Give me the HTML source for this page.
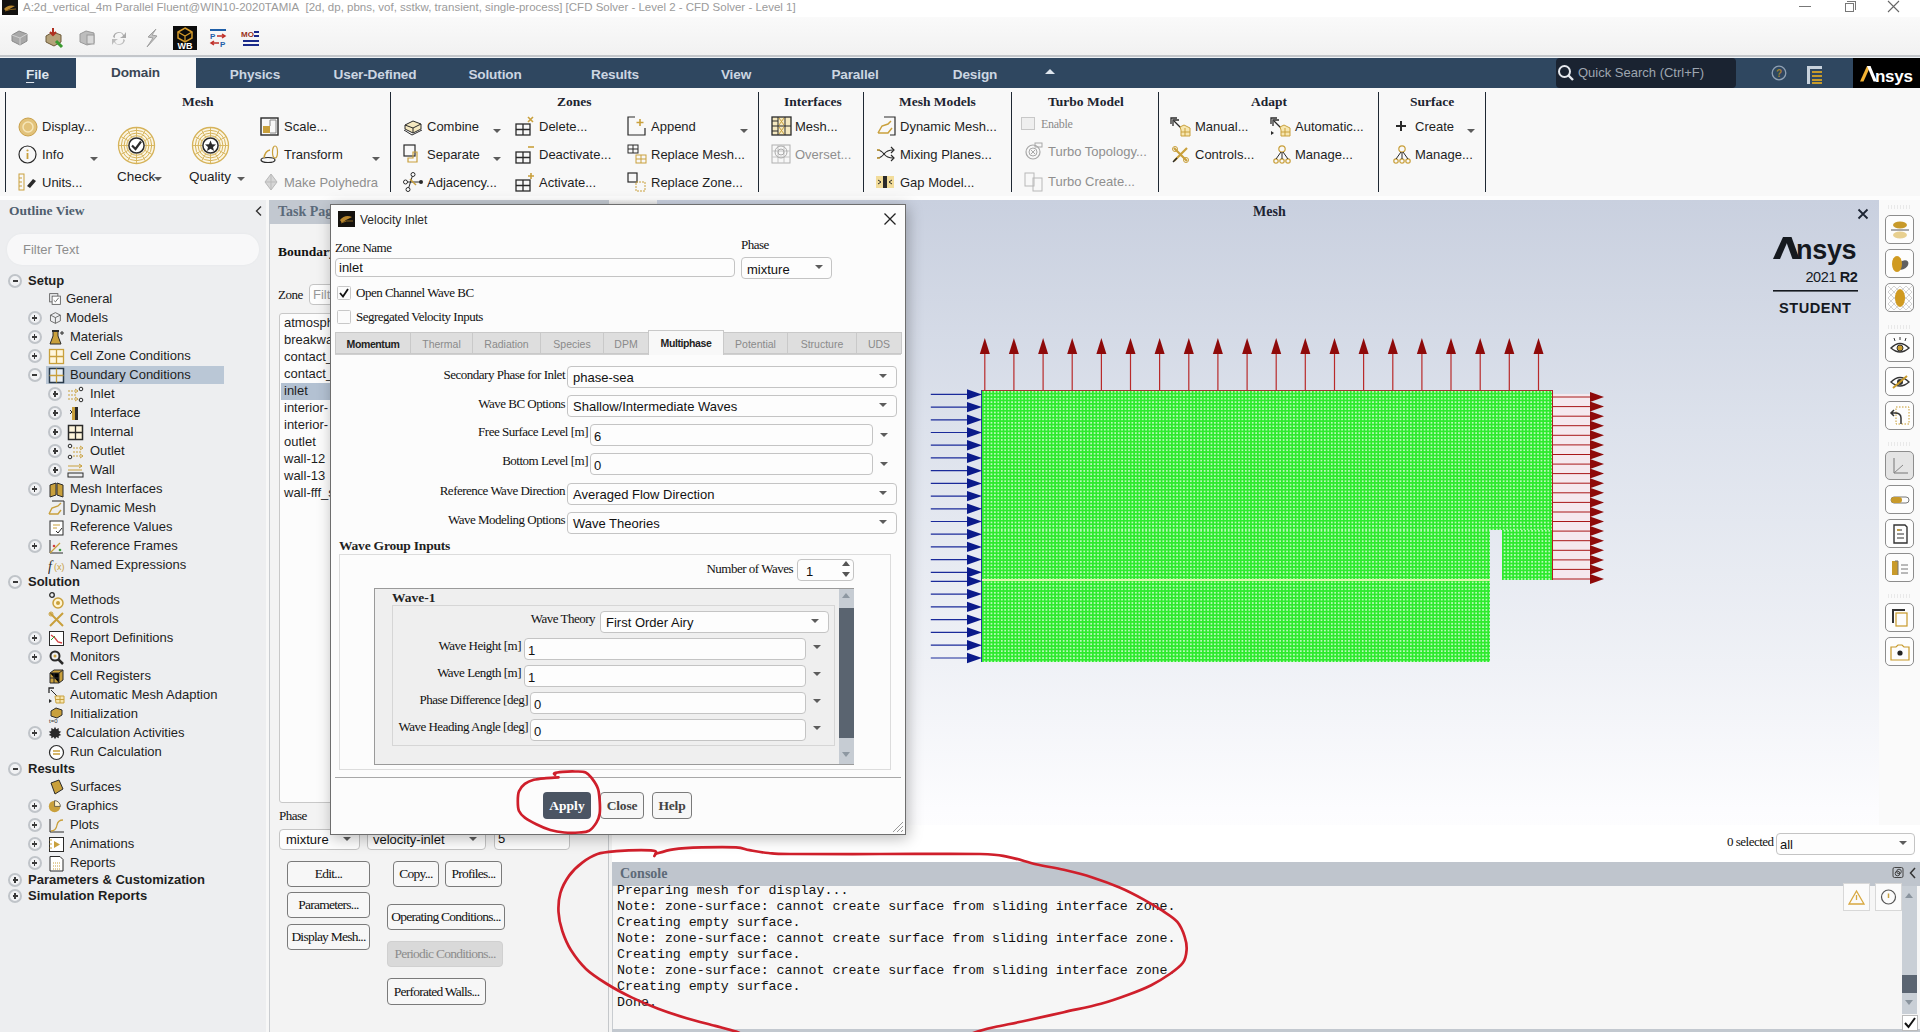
<!DOCTYPE html>
<html><head><meta charset="utf-8"><title>Fluent</title>
<style>
*{box-sizing:border-box}
html,body{margin:0;padding:0}
body{width:1920px;height:1032px;overflow:hidden;position:relative;background:#f3f3f3;font-family:"Liberation Sans",sans-serif;color:#222}
.a{position:absolute;white-space:nowrap}
.sf{font-family:"Liberation Serif",serif}
.mono{font-family:"Liberation Mono",monospace}
.rt{font-size:13px;color:#1e1e1e;line-height:16px}
.gt{font-family:"Liberation Serif",serif;font-weight:bold;font-size:13.5px;color:#1c2430;line-height:16px}
.caret{position:absolute;width:0;height:0;border-left:4.5px solid transparent;border-right:4.5px solid transparent;border-top:4.5px solid #5c5c5c}
.sep{position:absolute;width:1px;background:#1f2833;top:92px;height:100px}
.tab{position:absolute;top:59px;height:30px;line-height:31px;font-size:13.6px;font-weight:bold;color:#ccd6e2;letter-spacing:-0.15px}
.tr{position:absolute;font-size:13px;color:#1e1e1e;line-height:16px}
.pm{position:absolute;width:14px;height:14px;border-radius:50%;border:2px solid #c0c4c9;background:#f1f2f4}
.pm:before{content:"";position:absolute;left:2.5px;top:4.15px;width:5px;height:1.7px;background:#3a3a3a}
.pm.p:after{content:"";position:absolute;left:4.15px;top:2.4px;width:1.7px;height:5.2px;background:#3a3a3a}
.btn{position:absolute;border:1px solid #7a7a7a;border-radius:4px;background:#f7f7f7;font-family:"Liberation Serif",serif;font-size:13.5px;color:#111;text-align:center;letter-spacing:-0.75px}
.inp{position:absolute;border:1px solid #c4c4c4;border-radius:4px;background:#fdfdfd;font-size:13px;color:#111;padding-left:3px}
.lbl{position:absolute;font-family:"Liberation Serif",serif;font-size:13px;color:#111;letter-spacing:-0.5px;line-height:14px}
.dtab{position:absolute;top:332px;height:22px;line-height:22px;border:1px solid #c9c9c9;background:#dedede;font-size:10.5px;color:#8a8a8a;text-align:center}
.cl{position:absolute;left:617px;font-family:"Liberation Mono",monospace;font-size:13.3px;color:#111;line-height:16px}
.tbb{position:absolute;left:1885px;width:29px;height:29px;border:1px solid #8d8d8d;border-radius:5px;background:#fdfdfd}
</style></head><body>

<div class="a" style="left:0;top:0;width:1920px;height:17px;background:#fff"></div>
<div class="a" style="left:2px;top:0;width:16px;height:15px;background:#141210"><svg width="16" height="15"><path d="M2 9 Q6 4 13 6 Q9 8 4 11Z" fill="#b8862e"/><path d="M3 11 Q8 9 14 9" stroke="#8a6420" fill="none"/></svg></div>
<div class="a" style="left:23px;top:0px;font-size:11.5px;color:#9b9b9b;line-height:15px">A:2d_vertical_4m Parallel Fluent@WIN10-2020TAMIA&nbsp; [2d, dp, pbns, vof, sstkw, transient, single-process] [CFD Solver - Level 2 - CFD Solver - Level 1]</div>
<div class="a" style="left:1799px;top:6px;width:12px;height:1px;background:#777"></div>
<div class="a" style="left:1845px;top:3px;width:9px;height:9px;border:1px solid #777"></div><div class="a" style="left:1847px;top:1px;width:9px;height:9px;border-top:1px solid #777;border-right:1px solid #777"></div>
<svg class="a" style="left:1887px;top:0px" width="13" height="13"><path d="M1 1 L12 12 M12 1 L1 12" stroke="#666" stroke-width="1.1"/></svg>
<div class="a" style="left:0;top:17px;width:1920px;height:39px;background:linear-gradient(#fafafa,#f1f1f1)"></div>
<div class="a" style="left:0;top:55px;width:1920px;height:2px;background:#c3c6ca"></div>
<div class="a" style="left:0;top:57px;width:1920px;height:1px;background:#eef2f6"></div>
<svg class="a" style="left:10px;top:27px" width="20" height="20"><path d="M2 8 L9 4 L17 7 L17 14 L10 18 L2 14Z" fill="#a8a8a8" stroke="#8a8a8a"/><path d="M2 8 L10 11 L17 7 M10 11 L10 18" stroke="#cfcfcf" fill="none"/></svg>
<svg class="a" style="left:44px;top:27px" width="20" height="22"><path d="M2 9 L9 5 L17 8 L17 15 L10 19 L2 15Z" fill="#b5a27a" stroke="#6d5a3a"/><path d="M9 1 L9 8 M6 5 L9 8 L12 5" stroke="#b03020" stroke-width="2" fill="none"/><path d="M12 14 L18 20" stroke="#3a9a30" stroke-width="3"/></svg>
<svg class="a" style="left:78px;top:27px" width="20" height="20"><path d="M2 7 L8 4 L16 6 L16 16 L9 18 L2 15Z" fill="#bdbdbd" stroke="#999"/><rect x="9" y="8" width="7" height="9" fill="#d8d8d8" stroke="#999"/></svg>
<svg class="a" style="left:110px;top:29px" width="18" height="18"><path d="M3 8 A6 6 0 0 1 14 6 L16 3 L16 9 L10 9 L13 7 A4 4 0 0 0 5 9Z" fill="#a9a9a9"/><path d="M15 11 A6 6 0 0 1 4 13 L2 16 L2 10 L8 10 L5 12 A4 4 0 0 0 13 10Z" fill="#bdbdbd"/></svg>
<svg class="a" style="left:144px;top:28px" width="16" height="20"><path d="M12 1 L4 9 L9 10 L3 19 L13 8 L8 7Z" fill="#c4c4c4" stroke="#a0a0a0"/></svg>
<div class="a" style="left:173px;top:26px;width:24px;height:24px;background:#0c0c0c"><svg width="24" height="24"><path d="M12 2 L19 6 L19 12 L12 16 L5 12 L5 6Z" fill="none" stroke="#d49a2a" stroke-width="1.5"/><path d="M5 6 L12 10 L19 6 M12 10 L12 16" stroke="#d49a2a" stroke-width="1.2" fill="none"/><text x="12" y="23" font-size="9" font-weight="bold" fill="#fff" text-anchor="middle" font-family="Liberation Sans">WB</text></svg></div>
<svg class="a" style="left:209px;top:28px" width="18" height="20"><rect x="1" y="1" width="16" height="2" fill="#1f5fa8"/><text x="1" y="11" font-size="8" font-weight="bold" fill="#1f5fa8" font-family="Liberation Sans">P</text><path d="M8 8 L16 8 M13 6 L16 8 L13 10" stroke="#c0302a" stroke-width="1.5" fill="none"/><path d="M2 15 L10 15 M5 13 L2 15 L5 17" stroke="#c0302a" stroke-width="1.5" fill="none"/><text x="11" y="19" font-size="8" font-weight="bold" fill="#1f5fa8" font-family="Liberation Sans">P</text></svg>
<svg class="a" style="left:241px;top:29px" width="19" height="18"><text x="0" y="8" font-size="8" font-weight="bold" fill="#9a3020" font-family="Liberation Sans">MO</text><rect x="13" y="2" width="5" height="2" fill="#1a2a8a"/><rect x="13" y="6" width="5" height="2" fill="#1a2a8a"/><rect x="2" y="11" width="16" height="2" fill="#1a2a8a"/><rect x="2" y="15" width="16" height="2" fill="#1a2a8a"/></svg>
<div class="a" style="left:0;top:58px;width:1920px;height:30px;background:#2f4760"></div>
<div class="a" style="left:0;top:58px;width:76px;height:30px;background:#2d4560"></div>
<div class="tab" style="left:26px;color:#dfe6ee"><span style="text-decoration:underline;text-underline-offset:3px">F</span>ile</div>
<div class="a" style="left:76px;top:58px;width:120px;height:30px;background:#f8f8f8"></div>
<div class="tab" style="left:111px;top:57px;color:#3a4654">Domain</div>
<div class="tab" style="left:195px;width:120px;text-align:center">Physics</div>
<div class="tab" style="left:315px;width:120px;text-align:center">User-Defined</div>
<div class="tab" style="left:435px;width:120px;text-align:center">Solution</div>
<div class="tab" style="left:555px;width:120px;text-align:center">Results</div>
<div class="tab" style="left:676px;width:120px;text-align:center">View</div>
<div class="tab" style="left:795px;width:120px;text-align:center">Parallel</div>
<div class="tab" style="left:915px;width:120px;text-align:center">Design</div>
<div class="a" style="left:1045px;top:69px;width:0;height:0;border-left:5px solid transparent;border-right:5px solid transparent;border-bottom:5px solid #dfe6ee"></div>
<div class="a" style="left:1556px;top:58px;width:180px;height:30px;background:#1a2331;border-radius:4px"></div>
<svg class="a" style="left:1557px;top:64px" width="18" height="18"><circle cx="7.5" cy="7.5" r="5.5" stroke="#e6e9ee" stroke-width="2" fill="none"/><path d="M11.5 11.5 L16 16" stroke="#e6e9ee" stroke-width="2.4"/></svg>
<div class="a" style="left:1578px;top:58px;line-height:30px;font-size:13px;color:#9ea6b0">Quick Search (Ctrl+F)</div>
<svg class="a" style="left:1771px;top:65px" width="16" height="16"><circle cx="8" cy="8" r="6.8" stroke="#8fa0b3" stroke-width="1.3" fill="none"/><text x="8" y="12" font-size="10" font-weight="bold" fill="#a08030" text-anchor="middle" font-family="Liberation Sans">?</text></svg>
<svg class="a" style="left:1806px;top:65px" width="17" height="20"><rect x="1" y="1" width="15" height="3" fill="#c8d2dc"/><rect x="1" y="1" width="3" height="18" fill="#c8d2dc"/><rect x="6" y="6" width="10" height="2" fill="#c69a2a"/><rect x="6" y="10" width="10" height="2" fill="#c69a2a"/><rect x="6" y="14" width="10" height="2" fill="#c69a2a"/><rect x="6" y="17" width="10" height="2" fill="#c69a2a"/></svg>
<div class="a" style="left:1853px;top:58px;width:67px;height:30px;background:#000"></div>
<svg class="a" style="left:1858px;top:62px" width="60" height="24"><path d="M2 19.5 L9 4 L12.5 4 L5.5 19.5Z" fill="#f2b233"/><path d="M9 4 L12.5 4 L19 19.5 L15.5 19.5Z" fill="#fff"/><text x="17" y="19.5" font-size="17" font-weight="bold" fill="#fff" font-family="Liberation Sans" letter-spacing="-0.3">nsys</text></svg>
<div class="a" style="left:0;top:88px;width:1920px;height:109px;background:#f8f8f8"></div>
<div class="a" style="left:0;top:196px;width:1920px;height:4px;background:#fdfdfd"></div>
<div class="sep" style="left:5px"></div>
<div class="sep" style="left:390px"></div>
<div class="sep" style="left:758px"></div>
<div class="sep" style="left:863px"></div>
<div class="sep" style="left:1011px"></div>
<div class="sep" style="left:1158px"></div>
<div class="sep" style="left:1378px"></div>
<div class="sep" style="left:1485px"></div>
<div class="a gt" style="left:182px;top:94px">Mesh</div>
<div class="a gt" style="left:557px;top:94px">Zones</div>
<div class="a gt" style="left:784px;top:94px">Interfaces</div>
<div class="a gt" style="left:899px;top:94px">Mesh Models</div>
<div class="a gt" style="left:1048px;top:94px">Turbo Model</div>
<div class="a gt" style="left:1251px;top:94px">Adapt</div>
<div class="a gt" style="left:1410px;top:94px">Surface</div>
<svg class="a" style="left:18px;top:117px" width="20" height="20"><circle cx="10" cy="10" r="9" fill="#e2c27a" stroke="#c9a04a"/><circle cx="10" cy="10" r="5" fill="none" stroke="#f6e6b8" stroke-width="1.5"/></svg>
<div class="a rt" style="left:42px;top:119px;color:#1e1e1e">Display...</div>
<svg class="a" style="left:18px;top:145px" width="19" height="19"><circle cx="9.5" cy="9.5" r="8.5" fill="none" stroke="#2a2a2a" stroke-width="1.2"/><rect x="8.6" y="8" width="1.8" height="6" fill="#c9a03c"/><circle cx="9.5" cy="5.5" r="1.1" fill="#c9a03c"/></svg>
<div class="a rt" style="left:42px;top:147px;color:#1e1e1e">Info</div>
<div class="caret" style="left:90px;top:157px"></div>
<svg class="a" style="left:18px;top:172px" width="20" height="20"><rect x="1" y="2" width="5" height="16" fill="none" stroke="#c9a03c"/><path d="M1 6 H4 M1 10 H4 M1 14 H4" stroke="#c9a03c"/><path d="M9 14 L15 7 L18 9 L12 16Z" fill="#2a2a2a"/></svg>
<div class="a rt" style="left:42px;top:175px;color:#1e1e1e">Units...</div>
<svg class="a" style="left:117px;top:126px" width="39" height="39"><circle cx="19.5" cy="19.5" r="18" fill="#fcf6e4" stroke="#d6b35a" stroke-width="1.3"/><circle cx="19.5" cy="19.5" r="15.2" fill="none" stroke="#d6b35a" stroke-width="1"/><circle cx="19.5" cy="19.5" r="12.4" fill="none" stroke="#d6b35a" stroke-width="1"/><circle cx="19.5" cy="19.5" r="9.8" fill="none" stroke="#d6b35a" stroke-width="1"/><path d="M28.00 19.50 L37.50 19.50 M26.86 23.75 L35.09 28.50 M23.75 26.86 L28.50 35.09 M19.50 28.00 L19.50 37.50 M15.25 26.86 L10.50 35.09 M12.14 23.75 L3.91 28.50 M11.00 19.50 L1.50 19.50 M12.14 15.25 L3.91 10.50 M15.25 12.14 L10.50 3.91 M19.50 11.00 L19.50 1.50 M23.75 12.14 L28.50 3.91 M26.86 15.25 L35.09 10.50 " stroke="#d6b35a" stroke-width="0.9"/><circle cx="19.5" cy="19.5" r="7.6" fill="#fff" stroke="#2a2a2a" stroke-width="1.5"/><path d="M15 19.5 L18.5 23 L24 15.5" stroke="#2a2a2a" stroke-width="2.2" fill="none"/></svg>
<svg class="a" style="left:191px;top:126px" width="39" height="39"><circle cx="19.5" cy="19.5" r="18" fill="#fcf6e4" stroke="#d6b35a" stroke-width="1.3"/><circle cx="19.5" cy="19.5" r="15.2" fill="none" stroke="#d6b35a" stroke-width="1"/><circle cx="19.5" cy="19.5" r="12.4" fill="none" stroke="#d6b35a" stroke-width="1"/><circle cx="19.5" cy="19.5" r="9.8" fill="none" stroke="#d6b35a" stroke-width="1"/><path d="M28.00 19.50 L37.50 19.50 M26.86 23.75 L35.09 28.50 M23.75 26.86 L28.50 35.09 M19.50 28.00 L19.50 37.50 M15.25 26.86 L10.50 35.09 M12.14 23.75 L3.91 28.50 M11.00 19.50 L1.50 19.50 M12.14 15.25 L3.91 10.50 M15.25 12.14 L10.50 3.91 M19.50 11.00 L19.50 1.50 M23.75 12.14 L28.50 3.91 M26.86 15.25 L35.09 10.50 " stroke="#d6b35a" stroke-width="0.9"/><circle cx="19.5" cy="19.5" r="7.6" fill="#fff" stroke="#2a2a2a" stroke-width="1.5"/><path d="M19.5 14.5 L21 18.3 L25 18.5 L22 21 L23 25 L19.5 22.8 L16 25 L17 21 L14 18.5 L18 18.3Z" fill="#2a2a2a"/></svg>
<div class="a rt" style="left:117px;top:169px;font-size:13.5px">Check</div>
<div class="caret" style="left:154px;top:177px"></div>
<div class="a rt" style="left:189px;top:169px;font-size:13.5px">Quality</div>
<div class="caret" style="left:237px;top:177px"></div>
<svg class="a" style="left:260px;top:117px" width="19" height="19"><rect x="1" y="1" width="17" height="17" fill="none" stroke="#2a2a2a" stroke-width="1.4"/><rect x="3" y="9" width="7" height="7" fill="#c9a03c"/><path d="M10 9 V3 H16 V16 H10" fill="none" stroke="#888"/></svg>
<div class="a rt" style="left:284px;top:119px;color:#1e1e1e">Scale...</div>
<svg class="a" style="left:260px;top:145px" width="19" height="19"><ellipse cx="8" cy="15" rx="7" ry="2.5" fill="none" stroke="#2a2a2a" stroke-width="1.2"/><path d="M4 13 Q5 6 10 5" stroke="#c9a03c" stroke-width="1.5" fill="none"/><ellipse cx="15" cy="7" rx="2.5" ry="6" fill="none" stroke="#c9a03c" stroke-width="1.2"/></svg>
<div class="a rt" style="left:284px;top:147px;color:#1e1e1e">Transform</div>
<div class="caret" style="left:372px;top:157px"></div>
<svg class="a" style="left:264px;top:173px" width="14" height="18"><path d="M7 1 L13 9 L7 17 L1 9Z" fill="#d6d6d6" stroke="#b8b8b8"/><path d="M1 9 H13 M7 1 V17" stroke="#bbb"/></svg>
<div class="a rt" style="left:284px;top:175px;color:#8f8f8f">Make Polyhedra</div>
<svg class="a" style="left:403px;top:116px" width="20" height="20"><path d="M2 9 L10 5 L18 8 L18 13 L10 17 L2 13Z" fill="#f4e8c0" stroke="#2a2a2a"/><path d="M2 9 L10 12 L18 8 M10 12 V17" stroke="#2a2a2a" fill="none"/><path d="M1 14 L9 19 L19 14" stroke="#2a2a2a" fill="none"/></svg>
<div class="a rt" style="left:427px;top:119px;color:#1e1e1e">Combine</div>
<div class="caret" style="left:493px;top:129px"></div>
<svg class="a" style="left:403px;top:144px" width="20" height="20"><rect x="1" y="1" width="11" height="11" fill="none" stroke="#2a2a2a" stroke-width="1.2"/><path d="M14 8 V18 H5 V14 H10 V8Z" fill="none" stroke="#c9a03c" stroke-width="1.2"/></svg>
<div class="a rt" style="left:427px;top:147px;color:#1e1e1e">Separate</div>
<div class="caret" style="left:493px;top:157px"></div>
<svg class="a" style="left:403px;top:172px" width="20" height="20"><path d="M2 10 H18 M10 2 L5 18" stroke="#2a2a2a"/><circle cx="2.5" cy="10" r="2" fill="#fff" stroke="#2a2a2a"/><circle cx="10" cy="2.5" r="2" fill="#fff" stroke="#2a2a2a"/><circle cx="5" cy="17.5" r="2" fill="#fff" stroke="#2a2a2a"/><circle cx="18" cy="10" r="2" fill="#2a2a2a"/><path d="M7 7 L13 13" stroke="#c9a03c" stroke-width="1.5"/></svg>
<div class="a rt" style="left:427px;top:175px;color:#1e1e1e">Adjacency...</div>
<svg class="a" style="left:515px;top:116px" width="20" height="20"><rect x="1" y="8" width="14" height="11" fill="none" stroke="#2a2a2a" stroke-width="1.3"/><path d="M1 13.5 H15 M8 8 V19" stroke="#2a2a2a" stroke-width="1.3"/><path d="M13 1 L18 6 M18 1 L13 6" stroke="#c9a03c" stroke-width="1.6"/></svg>
<div class="a rt" style="left:539px;top:119px;color:#1e1e1e">Delete...</div>
<svg class="a" style="left:515px;top:144px" width="20" height="20"><rect x="1" y="8" width="14" height="11" fill="none" stroke="#2a2a2a" stroke-width="1.3"/><path d="M1 13.5 H15 M8 8 V19" stroke="#2a2a2a" stroke-width="1.3"/><path d="M13 3 H19" stroke="#c9a03c" stroke-width="1.6"/></svg>
<div class="a rt" style="left:539px;top:147px;color:#1e1e1e">Deactivate...</div>
<svg class="a" style="left:515px;top:172px" width="20" height="20"><rect x="1" y="8" width="14" height="11" fill="none" stroke="#2a2a2a" stroke-width="1.3"/><path d="M1 13.5 H15 M8 8 V19" stroke="#2a2a2a" stroke-width="1.3"/><path d="M13 4 H19 M16 1 V7" stroke="#c9a03c" stroke-width="1.6"/></svg>
<div class="a rt" style="left:539px;top:175px;color:#1e1e1e">Activate...</div>
<svg class="a" style="left:627px;top:116px" width="20" height="20"><path d="M8 1 H1 V19 H18 V12" fill="none" stroke="#2a2a2a" stroke-width="1.2"/><path d="M13 3 V10 M9.5 6.5 H16.5" stroke="#c9a03c" stroke-width="1.6"/></svg>
<div class="a rt" style="left:651px;top:119px;color:#1e1e1e">Append</div>
<div class="caret" style="left:740px;top:129px"></div>
<svg class="a" style="left:627px;top:144px" width="20" height="20"><rect x="1" y="1" width="10" height="8" fill="none" stroke="#2a2a2a"/><path d="M1 5 H11 M6 1 V9" stroke="#2a2a2a"/><rect x="9" y="11" width="10" height="8" fill="none" stroke="#c9a03c"/><path d="M9 15 H19 M14 11 V19" stroke="#c9a03c"/></svg>
<div class="a rt" style="left:651px;top:147px;color:#1e1e1e">Replace Mesh...</div>
<svg class="a" style="left:627px;top:172px" width="20" height="20"><rect x="1" y="1" width="9" height="9" fill="none" stroke="#2a2a2a" stroke-width="1.2"/><rect x="9" y="10" width="9" height="9" fill="none" stroke="#c9a03c" stroke-dasharray="2 1"/></svg>
<div class="a rt" style="left:651px;top:175px;color:#1e1e1e">Replace Zone...</div>
<svg class="a" style="left:771px;top:116px" width="21" height="20"><rect x="1" y="1" width="19" height="18" fill="#f4e8c0" stroke="#2a2a2a" stroke-width="1.3"/><path d="M1 10 H20 M7 1 V19 M14 1 V19 M1 5 H7 M1 15 H7" stroke="#2a2a2a"/><path d="M8 2 L13 9 M13 2 L8 9 M8 11 L13 18 M13 11 L8 18" stroke="#c9a03c"/></svg>
<div class="a rt" style="left:795px;top:119px;color:#1e1e1e">Mesh...</div>
<svg class="a" style="left:771px;top:144px" width="20" height="20"><rect x="1" y="1" width="18" height="18" fill="none" stroke="#b0b0b0"/><path d="M1 7 H19 M1 13 H19 M7 1 V19 M13 1 V19" stroke="#c4c4c4"/><circle cx="10" cy="8" r="6" fill="none" stroke="#aaa"/><circle cx="10" cy="8" r="3" fill="none" stroke="#aaa"/></svg>
<div class="a rt" style="left:795px;top:147px;color:#8f8f8f">Overset...</div>
<svg class="a" style="left:876px;top:116px" width="20" height="20"><path d="M8 1 H19 V19 H14" fill="none" stroke="#2a2a2a" stroke-width="1.2"/><path d="M2 17 L6 10 L12 8 L15 5 M2 17 H12 L16 12" stroke="#c9a03c" stroke-width="1.5" fill="none"/></svg>
<div class="a rt" style="left:900px;top:119px;color:#1e1e1e">Dynamic Mesh...</div>
<svg class="a" style="left:876px;top:146px" width="20" height="16"><path d="M1 4 Q5 4 8 8 Q11 12 17 12 M1 12 Q5 12 8 8 Q11 4 17 4" stroke="#2a2a2a" stroke-width="1.2" fill="none"/><path d="M15 1 L18 4 L15 7 M15 9 L18 12 L15 15" stroke="#2a2a2a" stroke-width="1.2" fill="none"/><path d="M1 4 H4 M1 12 H4" stroke="#c9a03c" stroke-width="1.5"/></svg>
<div class="a rt" style="left:900px;top:147px;color:#1e1e1e">Mixing Planes...</div>
<svg class="a" style="left:875px;top:175px" width="20" height="14"><rect x="1" y="1" width="18" height="12" fill="#f2dc9a"/><rect x="8" y="1" width="4" height="12" fill="#2a2a2a"/><path d="M3 5 L6 7 L3 9 M17 5 L14 7 L17 9" stroke="#2a2a2a" fill="none"/></svg>
<div class="a rt" style="left:900px;top:175px;color:#1e1e1e">Gap Model...</div>
<div class="a" style="left:1021px;top:117px;width:14px;height:13px;border:1px solid #c8c8c8;background:#efefef"></div>
<div class="a sf" style="left:1041px;top:117px;font-size:12px;color:#8a8a8a;letter-spacing:-0.3px">Enable</div>
<svg class="a" style="left:1025px;top:142px" width="18" height="18"><circle cx="8" cy="10" r="7" fill="none" stroke="#a8a8a8" stroke-width="1.2"/><circle cx="8" cy="10" r="4" fill="none" stroke="#a8a8a8"/><path d="M6 8 L10 12 M10 8 L6 12" stroke="#aaa"/><rect x="10" y="1" width="7" height="4" fill="none" stroke="#a8a8a8"/></svg>
<div class="a rt" style="left:1048px;top:144px;color:#8f8f8f">Turbo Topology...</div>
<svg class="a" style="left:1024px;top:172px" width="20" height="20"><rect x="1" y="1" width="9" height="13" fill="none" stroke="#b8b8b8"/><rect x="9" y="6" width="9" height="13" fill="none" stroke="#b8b8b8"/></svg>
<div class="a rt" style="left:1048px;top:174px;color:#8f8f8f">Turbo Create...</div>
<svg class="a" style="left:1170px;top:117px" width="22" height="20"><path d="M1 7 V1 H7 M3 9 V3 H9" stroke="#2a2a2a" stroke-width="1.3" fill="none"/><path d="M4 4 L12 12" stroke="#2a2a2a" stroke-width="1.3"/><path d="M10 10 L14 8 L20 11 V19 H11 V13Z" fill="#f6e6b0" stroke="#c9a03c"/><path d="M11 15 H20 M15 11 V19" stroke="#c9a03c"/></svg>
<div class="a rt" style="left:1195px;top:119px;color:#1e1e1e">Manual...</div>
<svg class="a" style="left:1270px;top:117px" width="22" height="20"><path d="M1 7 V1 H7 M3 9 V3 H9" stroke="#2a2a2a" stroke-width="1.3" fill="none"/><path d="M4 4 L12 12" stroke="#2a2a2a" stroke-width="1.3"/><path d="M10 10 L14 8 L20 11 V19 H11 V13Z" fill="#f6e6b0" stroke="#c9a03c"/><path d="M11 15 H20 M15 11 V19" stroke="#c9a03c"/><path d="M1 14 L4 16 L1 18Z" fill="#2a2a2a"/></svg>
<div class="a rt" style="left:1295px;top:119px;color:#1e1e1e">Automatic...</div>
<svg class="a" style="left:1171px;top:145px" width="19" height="19"><path d="M3 3 L16 16 M16 3 L3 16" stroke="#c9a03c" stroke-width="2.2"/><circle cx="4" cy="4" r="2.5" fill="none" stroke="#c9a03c"/><circle cx="15" cy="15" r="2.5" fill="none" stroke="#c9a03c"/><path d="M2 17 L6 13" stroke="#2a2a2a" stroke-width="1.5"/></svg>
<div class="a rt" style="left:1195px;top:147px;color:#1e1e1e">Controls...</div>
<svg class="a" style="left:1273px;top:145px" width="18" height="19"><circle cx="9" cy="4" r="3.2" fill="none" stroke="#c9a03c" stroke-width="1.2"/><circle cx="3" cy="16" r="2.2" fill="none" stroke="#c9a03c" stroke-width="1.2"/><circle cx="9" cy="16" r="2.2" fill="none" stroke="#c9a03c" stroke-width="1.2"/><circle cx="15" cy="16" r="2.2" fill="none" stroke="#c9a03c" stroke-width="1.2"/><path d="M8 7 L3 14 M9 7 V14 M10 7 L15 14" stroke="#2a2a2a"/></svg>
<div class="a rt" style="left:1295px;top:147px;color:#1e1e1e">Manage...</div>
<svg class="a" style="left:1395px;top:120px" width="12" height="12"><path d="M6 1 V11 M1 6 H11" stroke="#2a2a2a" stroke-width="2"/></svg>
<div class="a rt" style="left:1415px;top:119px;color:#1e1e1e">Create</div>
<div class="caret" style="left:1467px;top:129px"></div>
<svg class="a" style="left:1393px;top:145px" width="18" height="19"><circle cx="9" cy="4" r="3.2" fill="none" stroke="#c9a03c" stroke-width="1.2"/><circle cx="3" cy="16" r="2.2" fill="none" stroke="#c9a03c" stroke-width="1.2"/><circle cx="9" cy="16" r="2.2" fill="none" stroke="#c9a03c" stroke-width="1.2"/><circle cx="15" cy="16" r="2.2" fill="none" stroke="#c9a03c" stroke-width="1.2"/><path d="M8 7 L3 14 M9 7 V14 M10 7 L15 14" stroke="#2a2a2a"/></svg>
<div class="a rt" style="left:1415px;top:147px;color:#1e1e1e">Manage...</div>
<div class="a" style="left:0;top:200px;width:266px;height:832px;background:#edeef0"></div>
<div class="a" style="left:266px;top:200px;width:3px;height:832px;background:#f7f7f7"></div>
<div class="a sf" style="left:9px;top:202px;font-size:13.5px;font-weight:bold;color:#4f5e6e;line-height:18px">Outline View</div>
<svg class="a" style="left:254px;top:205px" width="9" height="12"><path d="M7 1.5 L2.5 6 L7 10.5" stroke="#333" stroke-width="1.4" fill="none"/></svg>
<div class="a" style="left:7px;top:234px;width:252px;height:31px;border-radius:15px;background:#f8f8f9;box-shadow:0 0 2px #e2e4e6"></div>
<div class="a" style="left:23px;top:242px;font-size:13px;color:#8e8e8e;line-height:16px">Filter Text</div>
<div class="a" style="left:46px;top:366px;width:178px;height:18px;background:#bac7d6"></div>
<div class="pm" style="left:8px;top:274px"></div>
<div class="tr" style="left:28px;top:273px;font-weight:bold;font-size:13px">Setup</div>
<svg class="a" style="left:48px;top:292px" width="14" height="14" viewBox="0 0 17 17"><rect x="2" y="2" width="10" height="10" fill="none" stroke="#555"/><rect x="5" y="5" width="10" height="10" fill="#fff" stroke="#555"/><path d="M7 10 L9 12 L13 7" stroke="#555" fill="none"/></svg>
<div class="tr" style="left:66px;top:291px">General</div>
<div class="pm p" style="left:27.5px;top:311px"></div>
<svg class="a" style="left:48px;top:311px" width="14" height="14" viewBox="0 0 17 17"><path d="M3 5 L9 2 L15 5 L15 12 L9 15 L3 12Z" fill="none" stroke="#555"/><path d="M3 5 L9 8 L15 5 M9 8 V15" stroke="#555" fill="none"/></svg>
<div class="tr" style="left:66px;top:310px">Models</div>
<div class="pm p" style="left:27.5px;top:330px"></div>
<svg class="a" style="left:48px;top:329px" width="17" height="17"><path d="M5 2 V7 L2 15 H13 L10 7 V2" fill="#c9a03c" stroke="#2a2a2a"/><rect x="4" y="1" width="7" height="2" fill="#2a2a2a"/><path d="M14 2 V6 M12 4 H16" stroke="#2a2a2a"/></svg>
<div class="tr" style="left:70px;top:329px">Materials</div>
<div class="pm p" style="left:27.5px;top:349px"></div>
<svg class="a" style="left:48px;top:348px" width="17" height="17"><rect x="1.5" y="1.5" width="14" height="14" fill="#fff6dc" stroke="#c9a03c" stroke-width="1.3"/><path d="M1.5 8.5 H15.5 M8.5 1.5 V15.5" stroke="#c9a03c" stroke-width="1.3"/></svg>
<div class="tr" style="left:70px;top:348px">Cell Zone Conditions</div>
<div class="pm" style="left:27.5px;top:368px"></div>
<svg class="a" style="left:48px;top:367px" width="17" height="17"><rect x="1.5" y="1.5" width="14" height="14" fill="#e8eef4" stroke="#2a3a4a" stroke-width="1.5"/><path d="M1.5 8.5 H15.5 M8.5 1.5 V15.5" stroke="#c9a03c" stroke-width="1.3"/></svg>
<div class="tr" style="left:70px;top:367px">Boundary Conditions</div>
<div class="pm p" style="left:48px;top:387px"></div>
<svg class="a" style="left:67px;top:386px" width="17" height="17"><path d="M1 5 H10 M1 9 H10 M1 13 H10" stroke="#c9a03c" stroke-dasharray="2 1"/><path d="M8 3 L11 5 L8 7 M8 11 L11 13 L8 15" stroke="#c9a03c" fill="none"/><circle cx="14" cy="3" r="1.8" fill="none" stroke="#2a2a2a"/><circle cx="14" cy="14" r="1.8" fill="none" stroke="#2a2a2a"/></svg>
<div class="tr" style="left:90px;top:386px">Inlet</div>
<div class="pm p" style="left:48px;top:406px"></div>
<svg class="a" style="left:67px;top:405px" width="17" height="17"><rect x="5" y="2" width="6" height="13" fill="#c9a03c"/><rect x="8" y="2" width="3" height="13" fill="#2a2a2a"/><path d="M3 5 L5 7 L3 9" stroke="#2a2a2a" fill="none"/></svg>
<div class="tr" style="left:90px;top:405px">Interface</div>
<div class="pm p" style="left:48px;top:425px"></div>
<svg class="a" style="left:67px;top:424px" width="17" height="17"><rect x="1.5" y="1.5" width="14" height="14" fill="#fff6dc" stroke="#2a2a2a" stroke-width="1.5"/><path d="M1.5 8.5 H15.5 M8.5 1.5 V15.5" stroke="#2a2a2a" stroke-width="1.3"/></svg>
<div class="tr" style="left:90px;top:424px">Internal</div>
<div class="pm p" style="left:48px;top:444px"></div>
<svg class="a" style="left:67px;top:443px" width="17" height="17"><path d="M6 5 H15 M6 9 H15 M6 13 H15" stroke="#c9a03c" stroke-dasharray="2 1"/><path d="M13 3 L16 5 L13 7 M13 11 L16 13 L13 15" stroke="#c9a03c" fill="none"/><circle cx="3" cy="3" r="1.8" fill="none" stroke="#2a2a2a"/><circle cx="3" cy="14" r="1.8" fill="none" stroke="#2a2a2a"/></svg>
<div class="tr" style="left:90px;top:443px">Outlet</div>
<div class="pm p" style="left:48px;top:463px"></div>
<svg class="a" style="left:67px;top:462px" width="17" height="17"><path d="M1 4 H15 M1 8 H15" stroke="#c9a03c"/><path d="M12 2 L15 4 L12 6" stroke="#c9a03c" fill="none"/><rect x="1" y="11" width="15" height="4" fill="none" stroke="#2a2a2a"/></svg>
<div class="tr" style="left:90px;top:462px">Wall</div>
<div class="pm p" style="left:27.5px;top:482px"></div>
<svg class="a" style="left:48px;top:481px" width="17" height="17"><path d="M2 4 L8 2 L8 14 L2 16Z" fill="#c9a03c" stroke="#2a2a2a"/><path d="M9 2 L15 4 L15 16 L9 14Z" fill="#c9a03c" stroke="#2a2a2a"/></svg>
<div class="tr" style="left:70px;top:481px">Mesh Interfaces</div>
<svg class="a" style="left:48px;top:500px" width="17" height="17"><path d="M4 1 H16 V15" fill="none" stroke="#2a2a2a"/><path d="M1 14 L4 8 L10 6 L13 3 M1 14 H10 L13 10" stroke="#c9a03c" stroke-width="1.4" fill="none"/></svg>
<div class="tr" style="left:70px;top:500px">Dynamic Mesh</div>
<svg class="a" style="left:48px;top:519px" width="17" height="17"><rect x="2" y="2" width="13" height="14" fill="#fff" stroke="#2a2a2a"/><path d="M5 6 H12 M5 9 H9" stroke="#c9a03c"/><path d="M8 12 L10 14 L14 9" stroke="#2a2a2a" fill="none"/></svg>
<div class="tr" style="left:70px;top:519px">Reference Values</div>
<div class="pm p" style="left:27.5px;top:539px"></div>
<svg class="a" style="left:48px;top:538px" width="17" height="17"><path d="M2 2 V15 H15" stroke="#2a2a2a" fill="none"/><path d="M2 15 L12 5" stroke="#c9a03c" stroke-width="1.3"/><circle cx="6" cy="8" r="1.3" fill="#d04040"/><circle cx="12" cy="12" r="1.3" fill="#40a040"/></svg>
<div class="tr" style="left:70px;top:538px">Reference Frames</div>
<svg class="a" style="left:48px;top:557px" width="17" height="17"><text x="0" y="14" font-size="14" font-style="italic" font-family="Liberation Serif" fill="#2a2a2a">f</text><text x="6" y="13" font-size="9" fill="#c9a03c" font-family="Liberation Sans">(x)</text></svg>
<div class="tr" style="left:70px;top:557px">Named Expressions</div>
<div class="pm" style="left:8px;top:575px"></div>
<div class="tr" style="left:28px;top:574px;font-weight:bold;font-size:13px">Solution</div>
<svg class="a" style="left:48px;top:592px" width="17" height="17"><circle cx="4" cy="3" r="2.3" fill="none" stroke="#2a2a2a" stroke-width="1.3"/><circle cx="10" cy="11" r="5" fill="#fff4d0" stroke="#c9a03c" stroke-width="1.5"/><circle cx="10" cy="11" r="2" fill="#c9a03c"/></svg>
<div class="tr" style="left:70px;top:592px">Methods</div>
<svg class="a" style="left:48px;top:611px" width="17" height="17"><path d="M2 2 L15 15 M15 2 L2 15" stroke="#c9a03c" stroke-width="2"/><circle cx="3" cy="3" r="2" fill="none" stroke="#c9a03c"/></svg>
<div class="tr" style="left:70px;top:611px">Controls</div>
<div class="pm p" style="left:27.5px;top:631px"></div>
<svg class="a" style="left:48px;top:630px" width="17" height="17"><rect x="1.5" y="1.5" width="14" height="14" fill="#fff" stroke="#2a2a2a"/><path d="M3 5 L7 8 L10 12 L14 13" stroke="#d04040" stroke-width="1.3" fill="none"/><path d="M3 10 L7 6" stroke="#3a3" /></svg>
<div class="tr" style="left:70px;top:630px">Report Definitions</div>
<div class="pm p" style="left:27.5px;top:650px"></div>
<svg class="a" style="left:48px;top:649px" width="17" height="17"><circle cx="7" cy="7" r="4.5" fill="none" stroke="#2a2a2a" stroke-width="2"/><path d="M10 10 L15 15" stroke="#2a2a2a" stroke-width="2.5"/><circle cx="7" cy="7" r="1.5" fill="#c9a03c"/></svg>
<div class="tr" style="left:70px;top:649px">Monitors</div>
<svg class="a" style="left:48px;top:668px" width="17" height="17"><path d="M2 5 L6 2 H15 V12 L11 15 H2Z" fill="#c9a03c" stroke="#2a2a2a"/><path d="M2 5 H11 V15 M11 5 L15 2 M6 5 V15 M2 10 H11" stroke="#2a2a2a"/></svg>
<div class="tr" style="left:70px;top:668px">Cell Registers</div>
<svg class="a" style="left:48px;top:687px" width="17" height="17"><path d="M1 6 V1 H6" stroke="#2a2a2a" stroke-width="1.3" fill="none"/><path d="M3 3 L9 9" stroke="#2a2a2a"/><path d="M7 9 L16 9 V16 H8Z" fill="#f6e6b0" stroke="#c9a03c"/><path d="M8 12.5 H16 M12 9 V16" stroke="#c9a03c"/><path d="M1 12 L4 14 L1 16Z" fill="#2a2a2a"/></svg>
<div class="tr" style="left:70px;top:687px">Automatic Mesh Adaption</div>
<svg class="a" style="left:48px;top:706px" width="17" height="17"><path d="M3 5 L8 2 L14 4 V9 L9 12 L3 10Z" fill="#c9a03c" stroke="#2a2a2a"/><text x="1" y="17" font-size="6" fill="#2a2a2a" font-family="Liberation Sans">t=0</text></svg>
<div class="tr" style="left:70px;top:706px">Initialization</div>
<div class="pm p" style="left:27.5px;top:726px"></div>
<svg class="a" style="left:48px;top:726px" width="14" height="14" viewBox="0 0 17 17"><path d="M8.5 1 L10 4 L13 2.5 L13 6 L16 7 L13.5 9 L16 11 L13 12 L13 15 L10 13.5 L8.5 16 L7 13.5 L4 15 L4 12 L1 11 L3.5 9 L1 7 L4 6 L4 2.5 L7 4Z" fill="#2a2a2a"/></svg>
<div class="tr" style="left:66px;top:725px">Calculation Activities</div>
<svg class="a" style="left:48px;top:744px" width="17" height="17"><circle cx="8.5" cy="8.5" r="7" fill="#fff" stroke="#2a2a2a" stroke-width="1.2"/><path d="M5 7 H12 M5 10 H12" stroke="#c9a03c" stroke-width="1.5"/></svg>
<div class="tr" style="left:70px;top:744px">Run Calculation</div>
<div class="pm" style="left:8px;top:762px"></div>
<div class="tr" style="left:28px;top:761px;font-weight:bold;font-size:13px">Results</div>
<svg class="a" style="left:48px;top:779px" width="17" height="17"><path d="M3 4 L11 1 L15 10 L7 15Z" fill="#c9a03c" stroke="#2a2a2a"/></svg>
<div class="tr" style="left:70px;top:779px">Surfaces</div>
<div class="pm p" style="left:27.5px;top:799px"></div>
<svg class="a" style="left:48px;top:799px" width="14" height="14" viewBox="0 0 17 17"><circle cx="8" cy="9" r="7" fill="#c9a03c"/><path d="M8 9 V2 A7 7 0 0 1 15 9Z" fill="#fff4d0" stroke="#2a2a2a" stroke-width="0.8"/></svg>
<div class="tr" style="left:66px;top:798px">Graphics</div>
<div class="pm p" style="left:27.5px;top:818px"></div>
<svg class="a" style="left:48px;top:817px" width="17" height="17"><path d="M2 2 V15 H16" stroke="#2a2a2a" fill="none"/><path d="M3 14 Q8 14 9 8 Q10 3 15 3" stroke="#c9a03c" stroke-width="1.3" fill="none"/></svg>
<div class="tr" style="left:70px;top:817px">Plots</div>
<div class="pm p" style="left:27.5px;top:837px"></div>
<svg class="a" style="left:48px;top:836px" width="17" height="17"><rect x="1.5" y="1.5" width="14" height="14" fill="#fff" stroke="#2a2a2a"/><path d="M6 5 L12 8.5 L6 12Z" fill="#c9a03c"/><path d="M1.5 4 H4 M1.5 8 H4 M1.5 12 H4" stroke="#c9a03c"/></svg>
<div class="tr" style="left:70px;top:836px">Animations</div>
<div class="pm p" style="left:27.5px;top:856px"></div>
<svg class="a" style="left:48px;top:855px" width="17" height="17"><path d="M2 1.5 H12 L15 4.5 V16 H2Z" fill="#fff" stroke="#2a2a2a"/><path d="M5 8 H12 M5 11 H12 M5 14 H12" stroke="#c9a03c" stroke-dasharray="1 1"/></svg>
<div class="tr" style="left:70px;top:855px">Reports</div>
<div class="pm p" style="left:8px;top:873px"></div>
<div class="tr" style="left:28px;top:872px;font-weight:bold;font-size:13px">Parameters &amp; Customization</div>
<div class="pm p" style="left:8px;top:889px"></div>
<div class="tr" style="left:28px;top:888px;font-weight:bold;font-size:13px">Simulation Reports</div>
<div class="a" style="left:269px;top:200px;width:340px;height:832px;background:#f3f3f3;border-left:1px solid #c9ccd0;border-right:1px solid #c4c7ca"></div>
<div class="a" style="left:269px;top:200px;width:340px;height:24px;background:#c2c8d0"></div>
<div class="a sf" style="left:278px;top:203px;font-size:14px;font-weight:bold;color:#5b6a7a;line-height:18px">Task Page</div>
<div class="a sf" style="left:278px;top:244px;font-size:13.5px;font-weight:bold;color:#111;line-height:16px">Boundary Conditions</div>
<div class="lbl" style="left:278px;top:288px">Zone</div>
<div class="inp" style="left:309px;top:284px;width:150px;height:21px;color:#999;line-height:19px">Filter Text</div>
<div class="a" style="left:279px;top:313px;width:300px;height:490px;background:#fcfcfc;border:1px solid #c8c8c8;border-radius:3px"></div>
<div class="a" style="left:281px;top:383px;width:200px;height:17px;background:#b3c1d2"></div>
<div class="tr" style="left:284px;top:315px">atmosphere</div>
<div class="tr" style="left:284px;top:332px">breakwater</div>
<div class="tr" style="left:284px;top:349px">contact_region</div>
<div class="tr" style="left:284px;top:366px">contact_region</div>
<div class="tr" style="left:284px;top:383px">inlet</div>
<div class="tr" style="left:284px;top:400px">interior-</div>
<div class="tr" style="left:284px;top:417px">interior-</div>
<div class="tr" style="left:284px;top:434px">outlet</div>
<div class="tr" style="left:284px;top:451px">wall-12</div>
<div class="tr" style="left:284px;top:468px">wall-13</div>
<div class="tr" style="left:284px;top:485px">wall-fff_s</div>
<div class="lbl" style="left:279px;top:809px">Phase</div>
<div class="inp" style="left:279px;top:829px;width:81px;height:21px;line-height:19px;padding-left:6px">mixture</div>
<div class="caret" style="left:343px;top:837px"></div>
<div class="inp" style="left:367px;top:829px;width:119px;height:21px;line-height:19px;padding-left:5px">velocity-inlet</div>
<div class="caret" style="left:469px;top:837px"></div>
<div class="inp" style="left:494px;top:829px;width:76px;height:21px;line-height:17px">5</div>
<div class="btn" style="left:287px;top:861px;width:83px;height:26px;line-height:24px;">Edit...</div>
<div class="btn" style="left:393px;top:861px;width:46px;height:26px;line-height:24px;">Copy...</div>
<div class="btn" style="left:445px;top:861px;width:57px;height:26px;line-height:24px;">Profiles...</div>
<div class="btn" style="left:287px;top:892px;width:83px;height:26px;line-height:24px;">Parameters...</div>
<div class="btn" style="left:287px;top:924px;width:83px;height:26px;line-height:24px;">Display Mesh...</div>
<div class="btn" style="left:387px;top:904px;width:118px;height:26px;line-height:24px;">Operating Conditions...</div>
<div class="btn" style="left:387px;top:941px;width:116px;height:26px;line-height:24px;background:#d9d9d9;border-color:#d0d0d0;color:#8c8c8c">Periodic Conditions...</div>
<div class="btn" style="left:387px;top:978px;width:99px;height:27px;line-height:25px;">Perforated Walls...</div>
<div class="a" style="left:609px;top:200px;width:48px;height:662px;background:#f3f3f3"></div>
<div class="a" style="left:609px;top:200px;width:48px;height:4px;background:linear-gradient(#f4f4f4,#e6e6e6)"></div>
<div class="a" style="left:616px;top:837px;width:4px;height:11px;background-image:radial-gradient(#a8a8a8 0.7px,transparent 0.9px);background-size:2px 3px"></div>
<div class="a" style="left:657px;top:200px;width:1222px;height:662px;background:linear-gradient(#c9d0df 0%,#dde2ec 35%,#eff1f6 70%,#fcfcfe 92%,#ffffff 100%)"></div>
<div class="a" style="left:1879px;top:200px;width:41px;height:662px;background:#fafafa"></div>
<div class="a sf" style="left:1253px;top:204px;font-size:14px;font-weight:bold;color:#1d2533;line-height:16px">Mesh</div>
<svg class="a" style="left:1857px;top:208px" width="12" height="12"><path d="M1.5 1.5 L10.5 10.5 M10.5 1.5 L1.5 10.5" stroke="#1d2533" stroke-width="1.8"/></svg>
<svg class="a" style="left:1768px;top:230px" width="96" height="90"><path d="M5.0 29.0 L12.0 29.0 L21.5 7.0 L15.0 7.0Z" fill="#15191f"/><path d="M16.5 7.0 L23.5 7.0 L31.5 29.0 L24.5 29.0Z" fill="#15191f"/><text x="28" y="29" font-size="27" font-weight="bold" fill="#15191f" font-family="Liberation Sans" letter-spacing="-0.3">nsys</text><text x="89.5" y="51.69999999999999" font-size="14.5" fill="#15191f" font-family="Liberation Sans" text-anchor="end" letter-spacing="-0.4">2021 <tspan font-weight="bold">R2</tspan></text><rect x="5" y="60" width="85" height="1.6" fill="#15191f"/><text x="47.299999999999955" y="82.69999999999999" font-size="14.6" font-weight="bold" fill="#15191f" font-family="Liberation Sans" text-anchor="middle" letter-spacing="0.5">STUDENT</text></svg>
<div class="a" style="left:982px;top:391px;width:570px;height:139px;background-color:#b8fbb8;background-image:linear-gradient(90deg,#2eea2e 1.4px,transparent 1.4px),linear-gradient(0deg,#2eea2e 1.4px,transparent 1.4px);background-size:3.45px 3.45px"></div>
<div class="a" style="left:982px;top:530px;width:508px;height:132px;background-color:#b8fbb8;background-image:linear-gradient(90deg,#2eea2e 1.4px,transparent 1.4px),linear-gradient(0deg,#2eea2e 1.4px,transparent 1.4px);background-size:3.45px 3.45px"></div>
<div class="a" style="left:1502px;top:530px;width:50px;height:50px;background-color:#b8fbb8;background-image:linear-gradient(90deg,#2eea2e 1.4px,transparent 1.4px),linear-gradient(0deg,#2eea2e 1.4px,transparent 1.4px);background-size:3.45px 3.45px"></div>
<div class="a" style="left:982px;top:579px;width:508px;height:2px;background:#d8f8a8"></div>
<div class="a" style="left:982px;top:390px;width:571px;height:1px;background:#a83030"></div>
<div class="a" style="left:1552px;top:390px;width:1px;height:190px;background:#b02020"></div>
<div class="a" style="left:981px;top:390px;width:1px;height:272px;background:#3040a0"></div>
<svg class="a" style="left:920px;top:330px" width="700" height="340"><path d="M64.8 60 V22" stroke="#b82a2a" stroke-width="1.2"/><path d="M59.8 24 L64.8 8 L69.8 24Z" fill="#8e0a0a"/><path d="M93.9 60 V22" stroke="#b82a2a" stroke-width="1.2"/><path d="M88.9 24 L93.9 8 L98.9 24Z" fill="#8e0a0a"/><path d="M123.1 60 V22" stroke="#b82a2a" stroke-width="1.2"/><path d="M118.1 24 L123.1 8 L128.1 24Z" fill="#8e0a0a"/><path d="M152.2 60 V22" stroke="#b82a2a" stroke-width="1.2"/><path d="M147.2 24 L152.2 8 L157.2 24Z" fill="#8e0a0a"/><path d="M181.4 60 V22" stroke="#b82a2a" stroke-width="1.2"/><path d="M176.4 24 L181.4 8 L186.4 24Z" fill="#8e0a0a"/><path d="M210.5 60 V22" stroke="#b82a2a" stroke-width="1.2"/><path d="M205.5 24 L210.5 8 L215.5 24Z" fill="#8e0a0a"/><path d="M239.6 60 V22" stroke="#b82a2a" stroke-width="1.2"/><path d="M234.6 24 L239.6 8 L244.6 24Z" fill="#8e0a0a"/><path d="M268.8 60 V22" stroke="#b82a2a" stroke-width="1.2"/><path d="M263.8 24 L268.8 8 L273.8 24Z" fill="#8e0a0a"/><path d="M297.9 60 V22" stroke="#b82a2a" stroke-width="1.2"/><path d="M292.9 24 L297.9 8 L302.9 24Z" fill="#8e0a0a"/><path d="M327.1 60 V22" stroke="#b82a2a" stroke-width="1.2"/><path d="M322.1 24 L327.1 8 L332.1 24Z" fill="#8e0a0a"/><path d="M356.2 60 V22" stroke="#b82a2a" stroke-width="1.2"/><path d="M351.2 24 L356.2 8 L361.2 24Z" fill="#8e0a0a"/><path d="M385.3 60 V22" stroke="#b82a2a" stroke-width="1.2"/><path d="M380.3 24 L385.3 8 L390.3 24Z" fill="#8e0a0a"/><path d="M414.5 60 V22" stroke="#b82a2a" stroke-width="1.2"/><path d="M409.5 24 L414.5 8 L419.5 24Z" fill="#8e0a0a"/><path d="M443.6 60 V22" stroke="#b82a2a" stroke-width="1.2"/><path d="M438.6 24 L443.6 8 L448.6 24Z" fill="#8e0a0a"/><path d="M472.8 60 V22" stroke="#b82a2a" stroke-width="1.2"/><path d="M467.8 24 L472.8 8 L477.8 24Z" fill="#8e0a0a"/><path d="M501.9 60 V22" stroke="#b82a2a" stroke-width="1.2"/><path d="M496.9 24 L501.9 8 L506.9 24Z" fill="#8e0a0a"/><path d="M531.0 60 V22" stroke="#b82a2a" stroke-width="1.2"/><path d="M526.0 24 L531.0 8 L536.0 24Z" fill="#8e0a0a"/><path d="M560.2 60 V22" stroke="#b82a2a" stroke-width="1.2"/><path d="M555.2 24 L560.2 8 L565.2 24Z" fill="#8e0a0a"/><path d="M589.3 60 V22" stroke="#b82a2a" stroke-width="1.2"/><path d="M584.3 24 L589.3 8 L594.3 24Z" fill="#8e0a0a"/><path d="M618.5 60 V22" stroke="#b82a2a" stroke-width="1.2"/><path d="M613.5 24 L618.5 8 L623.5 24Z" fill="#8e0a0a"/><path d="M10.799999999999955 64.4 H48" stroke="#1a2a9a" stroke-width="1.2"/><path d="M47 59.2 L62 64.4 L47 69.6Z" fill="#0a1a8a"/><path d="M10.799999999999955 77.1 H48" stroke="#1a2a9a" stroke-width="1.2"/><path d="M47 71.9 L62 77.1 L47 82.3Z" fill="#0a1a8a"/><path d="M10.799999999999955 89.8 H48" stroke="#1a2a9a" stroke-width="1.2"/><path d="M47 84.6 L62 89.8 L47 95.0Z" fill="#0a1a8a"/><path d="M10.799999999999955 102.5 H48" stroke="#1a2a9a" stroke-width="1.2"/><path d="M47 97.3 L62 102.5 L47 107.7Z" fill="#0a1a8a"/><path d="M10.799999999999955 115.2 H48" stroke="#1a2a9a" stroke-width="1.2"/><path d="M47 110.0 L62 115.2 L47 120.4Z" fill="#0a1a8a"/><path d="M10.799999999999955 127.9 H48" stroke="#1a2a9a" stroke-width="1.2"/><path d="M47 122.7 L62 127.9 L47 133.1Z" fill="#0a1a8a"/><path d="M10.799999999999955 140.7 H48" stroke="#1a2a9a" stroke-width="1.2"/><path d="M47 135.5 L62 140.7 L47 145.9Z" fill="#0a1a8a"/><path d="M10.799999999999955 153.4 H48" stroke="#1a2a9a" stroke-width="1.2"/><path d="M47 148.2 L62 153.4 L47 158.6Z" fill="#0a1a8a"/><path d="M10.799999999999955 166.1 H48" stroke="#1a2a9a" stroke-width="1.2"/><path d="M47 160.9 L62 166.1 L47 171.3Z" fill="#0a1a8a"/><path d="M10.799999999999955 178.8 H48" stroke="#1a2a9a" stroke-width="1.2"/><path d="M47 173.6 L62 178.8 L47 184.0Z" fill="#0a1a8a"/><path d="M10.799999999999955 191.5 H48" stroke="#1a2a9a" stroke-width="1.2"/><path d="M47 186.3 L62 191.5 L47 196.7Z" fill="#0a1a8a"/><path d="M10.799999999999955 204.2 H48" stroke="#1a2a9a" stroke-width="1.2"/><path d="M47 199.0 L62 204.2 L47 209.4Z" fill="#0a1a8a"/><path d="M10.799999999999955 216.9 H48" stroke="#1a2a9a" stroke-width="1.2"/><path d="M47 211.7 L62 216.9 L47 222.1Z" fill="#0a1a8a"/><path d="M10.799999999999955 229.6 H48" stroke="#1a2a9a" stroke-width="1.2"/><path d="M47 224.4 L62 229.6 L47 234.8Z" fill="#0a1a8a"/><path d="M10.799999999999955 242.3 H48" stroke="#1a2a9a" stroke-width="1.2"/><path d="M47 237.1 L62 242.3 L47 247.5Z" fill="#0a1a8a"/><path d="M10.799999999999955 251.3 H48" stroke="#1a2a9a" stroke-width="1.2"/><path d="M47 246.1 L62 251.3 L47 256.5Z" fill="#0a1a8a"/><path d="M10.799999999999955 264.1 H48" stroke="#1a2a9a" stroke-width="1.2"/><path d="M47 258.9 L62 264.1 L47 269.3Z" fill="#0a1a8a"/><path d="M10.799999999999955 276.9 H48" stroke="#1a2a9a" stroke-width="1.2"/><path d="M47 271.7 L62 276.9 L47 282.1Z" fill="#0a1a8a"/><path d="M10.799999999999955 289.6 H48" stroke="#1a2a9a" stroke-width="1.2"/><path d="M47 284.4 L62 289.6 L47 294.8Z" fill="#0a1a8a"/><path d="M10.799999999999955 302.4 H48" stroke="#1a2a9a" stroke-width="1.2"/><path d="M47 297.2 L62 302.4 L47 307.6Z" fill="#0a1a8a"/><path d="M10.799999999999955 315.2 H48" stroke="#1a2a9a" stroke-width="1.2"/><path d="M47 310.0 L62 315.2 L47 320.4Z" fill="#0a1a8a"/><path d="M10.799999999999955 328.0 H48" stroke="#1a2a9a" stroke-width="1.2"/><path d="M47 322.8 L62 328.0 L47 333.2Z" fill="#0a1a8a"/></svg>
<svg class="a" style="left:1550px;top:390px" width="60" height="200"><rect x="3" y="4" width="37" height="186" fill="#f5e9ee"/><path d="M3 7.0 H40" stroke="#a81818" stroke-width="1"/><path d="M40 2.0 L54 7.0 L40 12.0Z" fill="#8e0a0a"/><path d="M3 16.6 H40" stroke="#a81818" stroke-width="1"/><path d="M40 11.6 L54 16.6 L40 21.6Z" fill="#8e0a0a"/><path d="M3 26.2 H40" stroke="#a81818" stroke-width="1"/><path d="M40 21.2 L54 26.2 L40 31.2Z" fill="#8e0a0a"/><path d="M3 35.7 H40" stroke="#a81818" stroke-width="1"/><path d="M40 30.7 L54 35.7 L40 40.7Z" fill="#8e0a0a"/><path d="M3 45.3 H40" stroke="#a81818" stroke-width="1"/><path d="M40 40.3 L54 45.3 L40 50.3Z" fill="#8e0a0a"/><path d="M3 54.9 H40" stroke="#a81818" stroke-width="1"/><path d="M40 49.9 L54 54.9 L40 59.9Z" fill="#8e0a0a"/><path d="M3 64.5 H40" stroke="#a81818" stroke-width="1"/><path d="M40 59.5 L54 64.5 L40 69.5Z" fill="#8e0a0a"/><path d="M3 74.1 H40" stroke="#a81818" stroke-width="1"/><path d="M40 69.1 L54 74.1 L40 79.1Z" fill="#8e0a0a"/><path d="M3 83.6 H40" stroke="#a81818" stroke-width="1"/><path d="M40 78.6 L54 83.6 L40 88.6Z" fill="#8e0a0a"/><path d="M3 93.2 H40" stroke="#a81818" stroke-width="1"/><path d="M40 88.2 L54 93.2 L40 98.2Z" fill="#8e0a0a"/><path d="M3 102.8 H40" stroke="#a81818" stroke-width="1"/><path d="M40 97.8 L54 102.8 L40 107.8Z" fill="#8e0a0a"/><path d="M3 112.4 H40" stroke="#a81818" stroke-width="1"/><path d="M40 107.4 L54 112.4 L40 117.4Z" fill="#8e0a0a"/><path d="M3 122.0 H40" stroke="#a81818" stroke-width="1"/><path d="M40 117.0 L54 122.0 L40 127.0Z" fill="#8e0a0a"/><path d="M3 131.5 H40" stroke="#a81818" stroke-width="1"/><path d="M40 126.5 L54 131.5 L40 136.5Z" fill="#8e0a0a"/><path d="M3 141.1 H40" stroke="#a81818" stroke-width="1"/><path d="M40 136.1 L54 141.1 L40 146.1Z" fill="#8e0a0a"/><path d="M3 150.7 H40" stroke="#a81818" stroke-width="1"/><path d="M40 145.7 L54 150.7 L40 155.7Z" fill="#8e0a0a"/><path d="M3 160.3 H40" stroke="#a81818" stroke-width="1"/><path d="M40 155.3 L54 160.3 L40 165.3Z" fill="#8e0a0a"/><path d="M3 169.9 H40" stroke="#a81818" stroke-width="1"/><path d="M40 164.9 L54 169.9 L40 174.9Z" fill="#8e0a0a"/><path d="M3 179.4 H40" stroke="#a81818" stroke-width="1"/><path d="M40 174.4 L54 179.4 L40 184.4Z" fill="#8e0a0a"/><path d="M3 189.0 H40" stroke="#a81818" stroke-width="1"/><path d="M40 184.0 L54 189.0 L40 194.0Z" fill="#8e0a0a"/></svg>
<div class="a" style="left:1887px;top:205px;width:24px;height:4px;background-image:radial-gradient(#b8b8b8 0.6px,transparent 0.8px);background-size:3px 2px"></div>
<div class="a" style="left:1887px;top:325px;width:24px;height:4px;background-image:radial-gradient(#b8b8b8 0.6px,transparent 0.8px);background-size:3px 2px"></div>
<div class="a" style="left:1887px;top:442px;width:24px;height:4px;background-image:radial-gradient(#b8b8b8 0.6px,transparent 0.8px);background-size:3px 2px"></div>
<div class="a" style="left:1887px;top:594px;width:24px;height:4px;background-image:radial-gradient(#b8b8b8 0.6px,transparent 0.8px);background-size:3px 2px"></div>
<div class="tbb" style="top:215px;background:#fdfdfd"><svg width="28" height="28" style="position:absolute;left:0;top:0"><ellipse cx="14" cy="9" rx="7" ry="3.5" fill="#c89a2a"/><path d="M5 14 H23" stroke="#555"/><ellipse cx="14" cy="19" rx="7" ry="3.5" fill="#e8d090"/></svg></div>
<div class="tbb" style="top:249px;background:#fdfdfd"><svg width="28" height="28" style="position:absolute;left:0;top:0"><ellipse cx="17" cy="15" rx="6" ry="4" fill="#606060" transform="rotate(-35 17 15)"/><ellipse cx="11" cy="14" rx="5" ry="8" fill="#d09a20"/></svg></div>
<div class="tbb" style="top:283px;background:#fdfdfd"><svg width="28" height="28" style="position:absolute;left:0;top:0"><path d="M2 2 L26 26 M8 2 L26 20 M14 2 L26 14 M20 2 L26 8 M2 8 L20 26 M2 14 L14 26 M2 20 L8 26 M26 2 L2 26 M20 2 L2 20 M14 2 L2 14 M8 2 L2 8 M26 8 L8 26 M26 14 L14 26 M26 20 L20 26" stroke="#c8c8c8" stroke-width="0.8"/><ellipse cx="14" cy="14" rx="5" ry="9" fill="#d09a20"/></svg></div>
<div class="tbb" style="top:333px;background:#fdfdfd"><svg width="28" height="28" style="position:absolute;left:0;top:0"><path d="M5 14 Q14 5 23 14 Q14 22 5 14Z" fill="none" stroke="#333" stroke-width="1.4"/><circle cx="14" cy="14" r="3" fill="#c89a2a" stroke="#333"/><path d="M9 7 L8 4 M14 6 V3 M19 7 L20 4" stroke="#333"/></svg></div>
<div class="tbb" style="top:367px;background:#fdfdfd"><svg width="28" height="28" style="position:absolute;left:0;top:0"><path d="M5 14 Q14 5 23 14 Q14 22 5 14Z" fill="none" stroke="#333" stroke-width="1.4"/><circle cx="14" cy="14" r="3" fill="#333"/><path d="M7 20 L21 8" stroke="#c89a2a" stroke-width="2"/></svg></div>
<div class="tbb" style="top:401px;background:#fdfdfd"><svg width="28" height="28" style="position:absolute;left:0;top:0"><rect x="10" y="5" width="13" height="17" fill="none" stroke="#c89a2a" stroke-dasharray="1.5 1.5"/><path d="M15 22 V16 Q15 11 9 11 H5 M8 8 L5 11 L8 14" stroke="#333" stroke-width="1.5" fill="none"/></svg></div>
<div class="tbb" style="top:451px;background:#e4e4e4"><svg width="28" height="28" style="position:absolute;left:0;top:0"><path d="M8 6 V21 H22" stroke="#777" fill="none"/><path d="M8 21 L17 13" stroke="#888"/></svg></div>
<div class="tbb" style="top:485px;background:#fdfdfd"><svg width="28" height="28" style="position:absolute;left:0;top:0"><rect x="5" y="11" width="18" height="6" rx="3" fill="none" stroke="#777"/><rect x="5" y="11" width="11" height="6" rx="3" fill="#c89a2a"/></svg></div>
<div class="tbb" style="top:519px;background:#fdfdfd"><svg width="28" height="28" style="position:absolute;left:0;top:0"><path d="M8 5 H19 L21 7 V23 H8Z" fill="none" stroke="#333" stroke-width="1.4"/><path d="M11 10 H16 M11 14 H18 M11 18 H18" stroke="#333"/><path d="M11 10 H14" stroke="#c89a2a" stroke-width="1.5"/></svg></div>
<div class="tbb" style="top:553px;background:#fdfdfd"><svg width="28" height="28" style="position:absolute;left:0;top:0"><rect x="6" y="7" width="6" height="14" fill="#c89a2a"/><path d="M9 7 H12 V21" stroke="#777" fill="none"/><path d="M15 11 H22 M15 15 H22 M15 19 H22" stroke="#777"/></svg></div>
<div class="tbb" style="top:603px;background:#fdfdfd"><svg width="28" height="28" style="position:absolute;left:0;top:0"><path d="M7 19 V6 H19" stroke="#333" stroke-width="2" fill="none"/><rect x="10" y="9" width="11" height="13" fill="none" stroke="#c89a2a" stroke-width="1.2"/></svg></div>
<div class="tbb" style="top:637px;background:#fdfdfd"><svg width="28" height="28" style="position:absolute;left:0;top:0"><path d="M5 9 H10 L12 7 H16 L18 9 H23 V22 H5Z" fill="none" stroke="#c89a2a" stroke-width="1.2"/><circle cx="14" cy="15" r="2.6" fill="#222"/></svg></div>
<div class="a" style="left:612px;top:825px;width:1308px;height:37px;background:#fff"></div>
<div class="lbl" style="left:1727px;top:835px;font-size:13px">0 selected</div>
<div class="inp" style="left:1776px;top:833px;width:139px;height:22px;line-height:22px;font-size:13px">all</div>
<div class="caret" style="left:1899px;top:841px"></div>
<div class="a" style="left:609px;top:862px;width:3px;height:170px;background:#f3f3f3"></div>
<div class="a" style="left:612px;top:862px;width:1308px;height:24px;background:#bfc5cd"></div>
<div class="a sf" style="left:620px;top:865px;font-size:14px;font-weight:bold;color:#5d6a78;line-height:17px">Console</div>
<svg class="a" style="left:1891px;top:866px" width="28" height="14"><rect x="2" y="1.5" width="10" height="10" rx="1.5" fill="none" stroke="#444"/><circle cx="6.5" cy="7.5" r="2.3" fill="none" stroke="#444"/><circle cx="8" cy="5.5" r="2.3" fill="none" stroke="#444"/><path d="M24 2 L19.5 7 L24 12" stroke="#333" stroke-width="1.5" fill="none"/></svg>
<div class="a" style="left:612px;top:886px;width:1308px;height:146px;background:#f6f6f6;border-left:1px solid #c8ccd0"></div>
<div class="a" style="left:612px;top:1029px;width:1308px;height:3px;background:#c2c8cf"></div>
<div class="cl" style="top:883px">Preparing mesh for display...</div>
<div class="cl" style="top:899px">Note: zone-surface: cannot create surface from sliding interface zone.</div>
<div class="cl" style="top:915px">Creating empty surface.</div>
<div class="cl" style="top:931px">Note: zone-surface: cannot create surface from sliding interface zone.</div>
<div class="cl" style="top:947px">Creating empty surface.</div>
<div class="cl" style="top:963px">Note: zone-surface: cannot create surface from sliding interface zone.</div>
<div class="cl" style="top:979px">Creating empty surface.</div>
<div class="cl" style="top:995px">Done.</div>
<div class="a" style="left:1843px;top:883px;width:27px;height:28px;border:1px solid #d8d8d8;background:#fbfbfb"><svg width="25" height="26"><path d="M12.5 7 L20 20 H5Z" fill="none" stroke="#d8a840" stroke-width="1.3"/><path d="M12.5 11 V16" stroke="#d8a840" stroke-width="1.3"/></svg></div>
<div class="a" style="left:1875px;top:883px;width:27px;height:28px;border:1px solid #d8d8d8;background:#fbfbfb"><svg width="25" height="26"><circle cx="12.5" cy="13" r="7" fill="none" stroke="#555" stroke-width="1.2"/><path d="M12.5 9.5 V14" stroke="#c8a040" stroke-width="1.5"/></svg></div>
<div class="a" style="left:1902px;top:886px;width:15px;height:128px;background:#c9cfd6"></div>
<div class="a" style="left:1902px;top:975px;width:15px;height:18px;background:#5b6572"></div>
<div class="a" style="left:1905px;top:893px;width:0;height:0;border-left:4.5px solid transparent;border-right:4.5px solid transparent;border-bottom:5px solid #8a949e"></div>
<div class="a" style="left:1905px;top:1000px;width:0;height:0;border-left:4.5px solid transparent;border-right:4.5px solid transparent;border-top:5px solid #8a949e"></div>
<svg class="a" style="left:1902px;top:1015px" width="16" height="17"><rect x="0.5" y="0.5" width="15" height="15" fill="#fff" stroke="#bbb"/><path d="M3 8 L6.5 12 L13 3" stroke="#111" stroke-width="2" fill="none"/></svg>
<div class="a" style="left:330px;top:204px;width:576px;height:631px;background:#fcfcfc;border:1px solid #6e6e6e;box-shadow:2px 3px 14px rgba(0,0,0,0.28)"></div>
<div class="a" style="left:338px;top:211px;width:17px;height:16px;background:#15120e"><svg width="17" height="16"><path d="M2 9 Q7 3 14 6 Q9 8 4 12Z" fill="#b8862e"/><path d="M3 12 Q8 9 15 10" stroke="#8a6420" fill="none"/></svg></div>
<div class="a" style="left:360px;top:212px;font-size:12px;color:#2a2a2a;line-height:16px">Velocity Inlet</div>
<svg class="a" style="left:883px;top:212px" width="14" height="14"><path d="M1.5 1.5 L12.5 12.5 M12.5 1.5 L1.5 12.5" stroke="#222" stroke-width="1.3"/></svg>
<div class="lbl" style="left:335px;top:241px">Zone Name</div>
<div class="inp" style="left:335px;top:258px;width:400px;height:19px;line-height:17px">inlet</div>
<div class="lbl" style="left:741px;top:238px">Phase</div>
<div class="inp" style="left:741px;top:257px;width:91px;height:22px;line-height:23px;padding-left:5px">mixture</div>
<div class="caret" style="left:815px;top:265px"></div>
<svg class="a" style="left:337px;top:286px" width="14" height="14"><rect x="0.5" y="0.5" width="13" height="13" rx="1" fill="#fbfbfb" stroke="#c8c8c8"/><path d="M3 7 L6 10.5 L11 3" stroke="#111" stroke-width="1.8" fill="none"/></svg>
<div class="lbl" style="left:356px;top:286px">Open Channel Wave BC</div>
<svg class="a" style="left:337px;top:310px" width="14" height="14"><rect x="0.5" y="0.5" width="13" height="13" rx="1" fill="#fbfbfb" stroke="#c8c8c8"/></svg>
<div class="lbl" style="left:356px;top:310px">Segregated Velocity Inputs</div>
<div class="a" style="left:335px;top:354px;width:566px;height:1px;background:#d0d0d0"></div>
<div class="dtab" style="left:335px;width:76px;color:#222;font-weight:bold;letter-spacing:-0.4px">Momentum</div>
<div class="dtab" style="left:410px;width:63px">Thermal</div>
<div class="dtab" style="left:472px;width:69px">Radiation</div>
<div class="dtab" style="left:540px;width:64px">Species</div>
<div class="dtab" style="left:603px;width:46px">DPM</div>
<div class="dtab" style="left:648px;width:76px;top:330px;height:25px;line-height:25px;background:#f8f8f8;color:#222;font-weight:bold;letter-spacing:-0.4px;border-bottom:none">Multiphase</div>
<div class="dtab" style="left:723px;width:65px">Potential</div>
<div class="dtab" style="left:787px;width:70px">Structure</div>
<div class="dtab" style="left:856px;width:46px">UDS</div>
<div class="lbl" style="right:1355px;top:367px;line-height:16px">Secondary Phase for Inlet</div>
<div class="inp" style="left:567px;top:366px;width:330px;height:22px;line-height:22px;padding-left:5px">phase-sea</div>
<div class="caret" style="left:879px;top:374px"></div>
<div class="lbl" style="right:1355px;top:396px;line-height:16px">Wave BC Options</div>
<div class="inp" style="left:567px;top:395px;width:330px;height:22px;line-height:22px;padding-left:5px">Shallow/Intermediate Waves</div>
<div class="caret" style="left:879px;top:403px"></div>
<div class="lbl" style="right:1332px;top:424px;line-height:16px">Free Surface Level [m]</div>
<div class="inp" style="left:590px;top:424px;width:283px;height:22px;line-height:24px">6</div>
<div class="caret" style="left:880px;top:433px"></div>
<div class="lbl" style="right:1332px;top:453px;line-height:16px">Bottom Level [m]</div>
<div class="inp" style="left:590px;top:453px;width:283px;height:22px;line-height:24px">0</div>
<div class="caret" style="left:880px;top:462px"></div>
<div class="lbl" style="right:1355px;top:483px;line-height:16px">Reference Wave Direction</div>
<div class="inp" style="left:567px;top:483px;width:330px;height:22px;line-height:22px;padding-left:5px">Averaged Flow Direction</div>
<div class="caret" style="left:879px;top:491px"></div>
<div class="lbl" style="right:1355px;top:512px;line-height:16px">Wave Modeling Options</div>
<div class="inp" style="left:567px;top:512px;width:330px;height:22px;line-height:22px;padding-left:5px">Wave Theories</div>
<div class="caret" style="left:879px;top:520px"></div>
<div class="a sf" style="left:339px;top:538px;font-size:13.5px;font-weight:bold;color:#222;line-height:16px;letter-spacing:-0.2px">Wave Group Inputs</div>
<div class="a" style="left:339px;top:554px;width:552px;height:216px;border:1px solid #dcdcdc"></div>
<div class="lbl" style="right:1127px;top:561px;line-height:16px">Number of Waves</div>
<div class="inp" style="left:797px;top:559px;width:57px;height:22px;line-height:24px;padding-left:8px">1</div>
<div class="a" style="left:842px;top:561px;width:0;height:0;border-left:4.5px solid transparent;border-right:4.5px solid transparent;border-bottom:5px solid #555"></div>
<div class="a" style="left:842px;top:572px;width:0;height:0;border-left:4.5px solid transparent;border-right:4.5px solid transparent;border-top:5px solid #555"></div>
<div class="a" style="left:374px;top:588px;width:480px;height:177px;background:#efefef;border:1px solid #9a9a9a"></div>
<div class="a" style="left:839px;top:589px;width:15px;height:175px;background:#c6ccd3"></div>
<div class="a" style="left:839px;top:608px;width:15px;height:130px;background:#5a6470"></div>
<div class="a" style="left:842px;top:593px;width:0;height:0;border-left:4.5px solid transparent;border-right:4.5px solid transparent;border-bottom:5px solid #8e98a2"></div>
<div class="a" style="left:842px;top:752px;width:0;height:0;border-left:4.5px solid transparent;border-right:4.5px solid transparent;border-top:5px solid #8e98a2"></div>
<div class="a sf" style="left:392px;top:590px;font-size:13.5px;font-weight:bold;color:#222;line-height:16px">Wave-1</div>
<div class="a" style="left:392px;top:605px;width:443px;height:141px;border:1px solid #d6d6d6"></div>
<div class="lbl" style="right:1325px;top:611px;line-height:16px">Wave Theory</div>
<div class="inp" style="left:600px;top:611px;width:229px;height:22px;line-height:22px;padding-left:5px">First Order Airy</div>
<div class="caret" style="left:811px;top:619px"></div>
<div class="lbl" style="right:1399px;top:638px;line-height:16px">Wave Height [m]</div>
<div class="inp" style="left:524px;top:638px;width:282px;height:22px;line-height:24px">1</div>
<div class="caret" style="left:813px;top:645px"></div>
<div class="lbl" style="right:1399px;top:665px;line-height:16px">Wave Length [m]</div>
<div class="inp" style="left:524px;top:665px;width:282px;height:22px;line-height:24px">1</div>
<div class="caret" style="left:813px;top:672px"></div>
<div class="lbl" style="right:1392px;top:692px;line-height:16px">Phase Difference [deg]</div>
<div class="inp" style="left:530px;top:692px;width:276px;height:22px;line-height:24px">0</div>
<div class="caret" style="left:813px;top:699px"></div>
<div class="lbl" style="right:1392px;top:719px;line-height:16px">Wave Heading Angle [deg]</div>
<div class="inp" style="left:530px;top:719px;width:276px;height:22px;line-height:24px">0</div>
<div class="caret" style="left:813px;top:726px"></div>
<div class="a" style="left:335px;top:777px;width:566px;height:1px;background:#a8a8a8"></div>
<div class="a" style="left:543px;top:792px;width:48px;height:27px;background:#4b5563;border-radius:4px;color:#fff;font-family:'Liberation Serif',serif;font-weight:bold;font-size:13.5px;text-align:center;line-height:27px">Apply</div>
<div class="btn" style="left:600px;top:792px;width:44px;height:27px;line-height:25px;font-weight:bold;color:#444;font-size:13.5px;letter-spacing:-0.2px">Close</div>
<div class="btn" style="left:652px;top:792px;width:40px;height:27px;line-height:25px;font-weight:bold;color:#444;font-size:13.5px;letter-spacing:-0.2px">Help</div>
<svg class="a" style="left:891px;top:820px" width="13" height="13"><path d="M12 2 L2 12 M12 6 L6 12 M12 10 L10 12" stroke="#999"/></svg>
<svg class="a" style="left:0;top:0;pointer-events:none" width="1920" height="1032"><path d="M555.2 774.8 C555.1 774.5 553.2 773.7 554.4 773.2 C555.6 772.7 559.2 772.2 562.6 771.9 C566.0 771.6 571.1 771.4 575.0 771.5 C578.9 771.6 582.8 771.2 585.7 772.4 C588.6 773.6 590.2 776.2 592.3 778.9 C594.3 781.6 596.8 785.1 598.0 788.8 C599.2 792.5 599.4 797.1 599.7 801.2 C600.0 805.3 600.2 809.9 599.7 813.5 C599.2 817.1 598.2 819.7 596.4 822.6 C594.6 825.5 591.9 829.1 589.0 830.8 C586.1 832.4 583.2 832.2 579.1 832.5 C575.0 832.8 569.1 832.9 564.3 832.5 C559.5 832.1 555.0 831.4 550.3 830.0 C545.6 828.6 540.5 826.3 536.3 824.2 C532.0 822.1 527.7 819.8 524.8 817.6 C521.9 815.4 520.2 813.7 519.0 811.0 C517.8 808.3 517.8 804.5 517.8 801.2 C517.8 797.9 517.8 794.2 519.0 791.3 C520.2 788.4 522.3 785.8 524.8 783.9 C527.3 782.0 530.2 780.8 533.8 779.8 C537.4 778.8 542.1 778.5 546.2 778.1 C550.3 777.7 556.5 777.4 558.5 777.3" fill="none" stroke="#cf1f2b" stroke-width="2.7" stroke-linecap="round" stroke-linejoin="round"/><path d="M654.4 856.0 C654.6 855.2 657.6 852.2 655.4 851.2 C653.2 850.2 647.6 850.2 641.1 850.2 C634.6 850.2 623.8 850.6 616.5 851.2 C609.2 851.8 603.2 852.1 597.5 854.0 C591.8 855.9 587.0 859.0 582.3 862.6 C577.5 866.2 572.6 870.8 569.0 875.9 C565.4 881.0 562.1 887.0 560.4 893.0 C558.6 899.0 558.2 905.7 558.5 912.0 C558.8 918.3 560.2 924.7 562.3 931.0 C564.4 937.3 566.9 943.7 570.9 950.0 C574.9 956.3 580.0 963.2 586.0 968.9 C592.0 974.6 599.4 979.2 607.0 984.0 C614.6 988.8 623.1 993.3 631.6 997.4 C640.1 1001.5 649.0 1005.3 658.2 1008.8 C667.4 1012.3 677.2 1015.4 686.7 1018.3 C696.2 1021.1 707.0 1023.7 715.2 1025.9 C723.4 1028.1 731.0 1029.9 736.0 1031.6 C741.0 1033.3 743.5 1035.3 745.0 1036.0" fill="none" stroke="#cf1f2b" stroke-width="2.7" stroke-linecap="round" stroke-linejoin="round"/><path d="M655.4 854.0 C658.4 853.2 665.6 850.4 673.4 849.3 C681.1 848.2 691.5 847.7 701.9 847.4 C712.3 847.1 728.1 846.9 736.0 847.4 C743.9 847.9 744.0 849.3 749.4 850.2 C754.8 851.1 761.5 852.4 768.3 853.0 C775.1 853.6 771.4 853.8 790.0 854.0 C808.6 854.2 848.3 854.0 880.0 854.0 C911.7 854.0 958.7 853.5 980.0 854.0 C1001.3 854.5 998.6 855.1 1007.9 856.8 C1017.2 858.5 1026.5 862.0 1035.8 864.2 C1045.1 866.4 1054.5 867.6 1063.8 869.8 C1073.1 872.0 1082.4 874.2 1091.7 877.2 C1101.0 880.2 1110.9 883.8 1119.6 887.5 C1128.3 891.2 1136.7 895.7 1143.8 899.6 C1150.9 903.5 1156.8 907.0 1162.4 910.7 C1168.0 914.4 1173.6 917.5 1177.3 921.9 C1181.0 926.2 1183.2 932.1 1184.7 936.8 C1186.2 941.4 1186.9 945.5 1186.6 949.8 C1186.3 954.1 1185.7 958.8 1182.9 962.8 C1180.1 966.8 1175.1 970.3 1169.8 974.0 C1164.5 977.7 1158.0 981.8 1151.2 985.2 C1144.4 988.6 1137.3 991.4 1128.9 994.5 C1120.5 997.6 1111.8 1000.8 1101.0 1003.8 C1090.2 1006.8 1076.2 1009.4 1063.8 1012.2 C1051.4 1015.0 1038.0 1018.0 1026.5 1020.5 C1015.0 1023.0 1002.6 1025.3 994.9 1027.0 C987.1 1028.7 985.0 1029.3 980.0 1030.8 C975.0 1032.3 967.5 1035.1 965.0 1036.0" fill="none" stroke="#cf1f2b" stroke-width="2.7" stroke-linecap="round" stroke-linejoin="round"/></svg>
</body></html>
